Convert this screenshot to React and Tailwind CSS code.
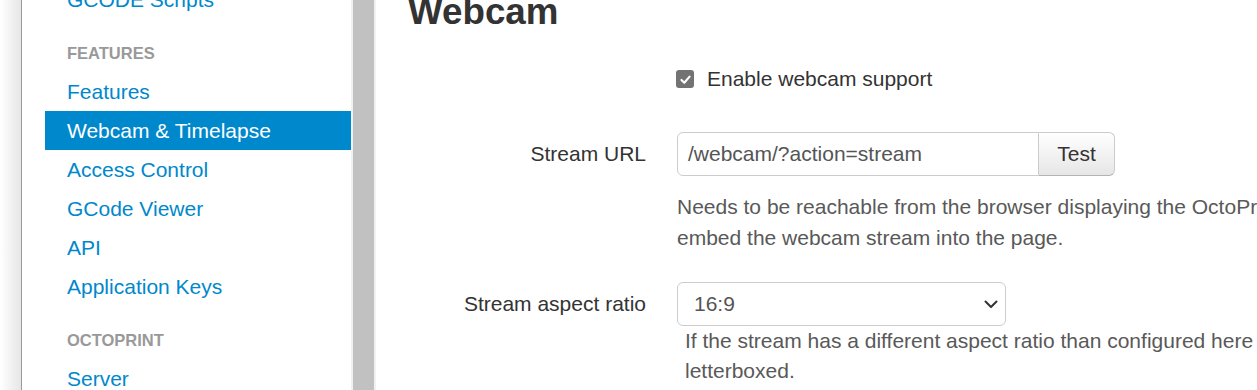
import React from "react";

const font = { fontFamily: '"Liberation Sans", Arial, Helvetica, sans-serif' };

function NavItem({ children, active }) {
  return (
    <div
      className={
        "h-[39px] leading-[39px] pl-[22px] text-[21px] whitespace-nowrap " +
        (active ? "bg-[#0088cc] text-white" : "text-[#0088cc]")
      }
    >
      {children}
    </div>
  );
}

function NavHeader({ children }) {
  return (
    <div className="h-[53px] pt-[23.5px] pl-[22px] text-[16.5px] leading-[20px] font-bold uppercase text-[#999999]">
      {children}
    </div>
  );
}

export default function App() {
  return (
    <div style={font} className="flex h-[390px] w-[1257px] overflow-hidden bg-white text-[#333333]">
      {/* left shadow + border */}
      <div className="w-[22px] shrink-0 bg-gradient-to-r from-white to-[#e6e6e6] border-r border-[#9a9a9a]" />
      {/* sidebar */}
      <div className="w-[329px] shrink-0 bg-white">
        <div className="mt-[-20px] pl-[23px]">
          <NavItem>GCODE Scripts</NavItem>
          <NavHeader>Features</NavHeader>
          <NavItem>Features</NavItem>
          <NavItem active>Webcam &amp; Timelapse</NavItem>
          <NavItem>Access Control</NavItem>
          <NavItem>GCode Viewer</NavItem>
          <NavItem>API</NavItem>
          <NavItem>Application Keys</NavItem>
          <NavHeader>OctoPrint</NavHeader>
          <NavItem>Server</NavItem>
        </div>
      </div>
      {/* scrollbar */}
      <div className="w-[25px] shrink-0 bg-[#f1f1f1] px-[2px]">
        <div className="h-full bg-[#c1c1c1]" />
      </div>
      {/* main */}
      <div className="flex-1 min-w-0 pl-[32px] flex flex-col">
        <h3 className="mt-[-7px] h-[37px] leading-[37px] text-[36.75px] font-bold text-[#333333] whitespace-nowrap">
          Webcam
        </h3>

        <div className="mt-[34px] h-[30px] flex items-center">
          <div className="w-[238px] shrink-0" />
          <div className="ml-[30px] flex items-center">
            <span className="w-[18px] h-[18px] rounded-[3px] bg-[#737373] flex items-center justify-center">
              <svg width="13" height="13" viewBox="0 0 16 16">
                <path d="M3 8.5 L6.5 12 L13 4.5" fill="none" stroke="white" strokeWidth="2.6" strokeLinecap="round" strokeLinejoin="round" />
              </svg>
            </span>
            <span className="ml-[13px] text-[21px] leading-[30px] whitespace-nowrap">Enable webcam support</span>
          </div>
        </div>

        <div className="mt-[38px] h-[44px] flex items-center">
          <div className="w-[238px] shrink-0 text-right text-[21px] leading-[30px] whitespace-nowrap">Stream URL</div>
          <div className="ml-[31px] flex h-[44px]">
            <div className="w-[362px] h-full border border-[#cccccc] rounded-l-[6px] flex items-center pl-[10px] text-[21px] text-[#555555] whitespace-nowrap">
              /webcam/?action=stream
            </div>
            <div className="w-[76px] h-full border border-l-0 border-[#cccccc] border-b-[#b3b3b3] rounded-r-[6px] bg-gradient-to-b from-white to-[#e6e6e6] flex items-center justify-center text-[21px] text-[#333333]">
              Test
            </div>
          </div>
        </div>

        <div className="mt-[14.5px] flex">
          <div className="w-[238px] shrink-0" />
          <div className="ml-[31px] text-[21px] leading-[31px] text-[#595959] whitespace-nowrap">
            <div>Needs to be reachable from the browser displaying the OctoPrint UI, used to</div>
            <div>embed the webcam stream into the page.</div>
          </div>
        </div>

        <div className="mt-[29.5px] h-[44px] flex items-center">
          <div className="w-[238px] shrink-0 text-right text-[21px] leading-[30px] whitespace-nowrap">Stream aspect ratio</div>
          <div className="ml-[31px] w-[329px] h-[44px] border border-[#cccccc] rounded-[6px] flex items-center justify-between pl-[16px] pr-[7px] text-[21px] text-[#555555]">
            <span>16:9</span>
            <svg width="14" height="9" viewBox="0 0 14 9">
              <path d="M1.5 1.5 L7 7 L12.5 1.5" fill="none" stroke="#333333" strokeWidth="2" strokeLinecap="round" strokeLinejoin="round" />
            </svg>
          </div>
        </div>

        <div className="flex">
          <div className="w-[238px] shrink-0" />
          <div className="ml-[39px] text-[21px] leading-[30px] text-[#595959] whitespace-nowrap">
            <div>If the stream has a different aspect ratio than configured here it will be</div>
            <div>letterboxed.</div>
          </div>
        </div>
      </div>
    </div>
  );
}
